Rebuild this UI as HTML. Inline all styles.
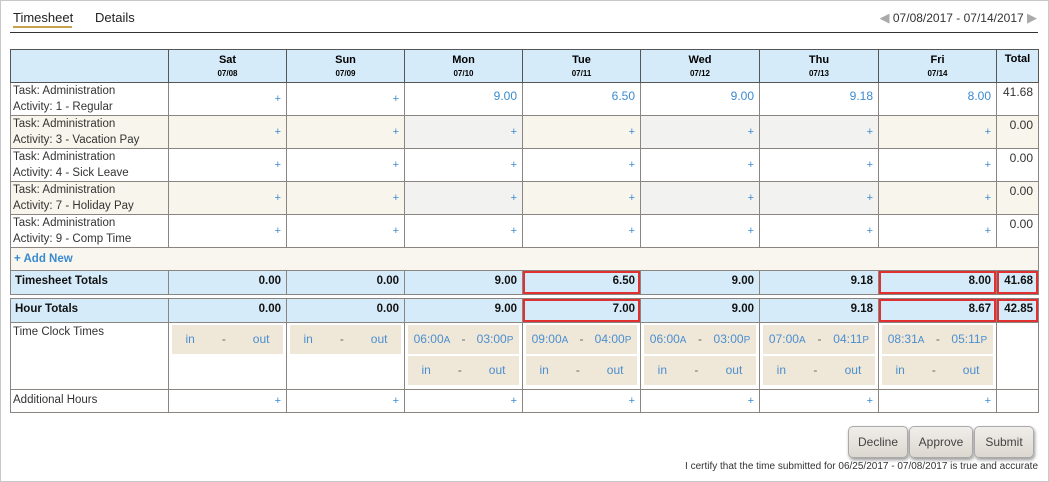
<!DOCTYPE html>
<html><head><style>
body{margin:0;width:1049px;height:482px;background:#fff;font-family:"Liberation Sans",Arial,sans-serif;position:relative;overflow:hidden}
.frame{position:absolute;left:0;top:0;width:1047px;height:480px;border:1px solid #c8c8c8}
.tab{position:absolute;top:10px;font-size:13px;color:#222}
.hr{position:absolute;left:10px;top:32px;width:1028px;height:1px;background:#333}
.range{position:absolute;right:12px;top:10px;font-size:12px;color:#333}
.range b{color:#aaa;font-size:13px;font-weight:normal}
table{position:absolute;left:10px;top:49px;border-collapse:collapse;table-layout:fixed;width:1028px;font-size:12px}
td{border:1px solid #8a8580;padding:0 5px;vertical-align:middle}
thead td{background:#d6ebfa;text-align:center;font-weight:bold;font-size:11px;height:29px;border-color:#555}
thead td small{display:block;font-size:8px;margin-top:3px}
.lab{padding:0 2px;color:#333;line-height:16px;font-size:11.5px}
.p{text-align:right;color:#3b8ad0;font-size:11px}
.v{text-align:right;color:#3b8ad0;vertical-align:top;padding-top:6px}
.tot{text-align:right;vertical-align:top;padding-top:2px;color:#333}
.alt td{background:#f7f5ec}
.alt td.g{background:#f2f2f0}
.t td{background:#d6ebfa;font-weight:bold;text-align:right;height:20px;color:#111;font-size:11.5px;padding-bottom:3px}
.t td:first-child{text-align:left;padding-left:4px}
.red{box-shadow:inset 0 0 0 2px #e03030}
.box{background:#efe7d8;height:29px;line-height:29px;color:#4c8fd0;font-size:12px;display:flex;justify-content:space-around;margin-bottom:2px}
.box span.d{color:#666}
.tc td{vertical-align:top;padding:2px 3px}
.btn{position:absolute;top:426px;height:30px;line-height:30px;font-size:12px;color:#444;background:linear-gradient(#f0eeea,#dcd8d0);border:1px solid #aaa;border-radius:5px;box-shadow:1px 2px 3px #999;text-align:center}
</style></head><body>
<div class="frame"></div>
<div class="tab" style="left:13px">Timesheet</div>
<div style="position:absolute;left:13px;top:26px;width:59px;height:2px;background:#c8a24a"></div>
<div class="tab" style="left:95px">Details</div>
<div class="hr"></div>
<div class="range"><b>◀</b> 07/08/2017 - 07/14/2017 <b>▶</b></div>
<table>
<colgroup><col style="width:158px"><col style="width:118px"><col style="width:118px"><col style="width:118px"><col style="width:118px"><col style="width:119px"><col style="width:119px"><col style="width:118px"><col style="width:42px"></colgroup>
<thead><tr><td></td><td>Sat<small>07/08</small></td><td>Sun<small>07/09</small></td><td>Mon<small>07/10</small></td><td>Tue<small>07/11</small></td><td>Wed<small>07/12</small></td><td>Thu<small>07/13</small></td><td>Fri<small>07/14</small></td><td style="vertical-align:top;padding-top:3px">Total</td></tr></thead>
<tbody>
<tr style="height:33px"><td class="lab">Task: Administration<br>Activity: 1 - Regular</td><td class="p">+</td><td class="p">+</td><td class="v">9.00</td><td class="v">6.50</td><td class="v">9.00</td><td class="v">9.18</td><td class="v">8.00</td><td class="tot">41.68</td></tr>
<tr style="height:33px" class="alt"><td class="lab">Task: Administration<br>Activity: 3 - Vacation Pay</td><td class="p">+</td><td class="p">+</td><td class="p g">+</td><td class="p">+</td><td class="p g">+</td><td class="p g">+</td><td class="p">+</td><td class="tot">0.00</td></tr>
<tr style="height:33px"><td class="lab">Task: Administration<br>Activity: 4 - Sick Leave</td><td class="p">+</td><td class="p">+</td><td class="p">+</td><td class="p">+</td><td class="p">+</td><td class="p">+</td><td class="p">+</td><td class="tot">0.00</td></tr>
<tr style="height:33px" class="alt"><td class="lab">Task: Administration<br>Activity: 7 - Holiday Pay</td><td class="p">+</td><td class="p">+</td><td class="p g">+</td><td class="p">+</td><td class="p g">+</td><td class="p g">+</td><td class="p">+</td><td class="tot">0.00</td></tr>
<tr style="height:33px"><td class="lab">Task: Administration<br>Activity: 9 - Comp Time</td><td class="p">+</td><td class="p">+</td><td class="p">+</td><td class="p">+</td><td class="p">+</td><td class="p">+</td><td class="p">+</td><td class="tot">0.00</td></tr>
<tr style="height:23px"><td colspan="9" style="background:#f8f6ee;color:#3b8ad0;font-weight:bold;padding-left:3px;font-size:11.5px">+ Add New</td></tr>
<tr class="t"><td>Timesheet Totals</td><td>0.00</td><td>0.00</td><td>9.00</td><td class="red">6.50</td><td>9.00</td><td>9.18</td><td class="red">8.00</td><td class="red">41.68</td></tr>
<tr style="height:4px"><td colspan="9" style="border-left:none;border-right:none;padding:0;background:#fff"></td></tr>
<tr class="t"><td>Hour Totals</td><td>0.00</td><td>0.00</td><td>9.00</td><td class="red">7.00</td><td>9.00</td><td>9.18</td><td class="red">8.67</td><td class="red">42.85</td></tr>
<tr class="tc" style="height:64px"><td class="lab" style="padding:1px 2px">Time Clock Times</td>
<td><div class="box"><span>in</span><span class="d">-</span><span>out</span></div></td>
<td><div class="box"><span>in</span><span class="d">-</span><span>out</span></div></td>
<td><div class="box"><span>06:00<small>A</small></span><span class="d">-</span><span>03:00<small>P</small></span></div><div class="box"><span>in</span><span class="d">-</span><span>out</span></div></td>
<td><div class="box"><span>09:00<small>A</small></span><span class="d">-</span><span>04:00<small>P</small></span></div><div class="box"><span>in</span><span class="d">-</span><span>out</span></div></td>
<td><div class="box"><span>06:00<small>A</small></span><span class="d">-</span><span>03:00<small>P</small></span></div><div class="box"><span>in</span><span class="d">-</span><span>out</span></div></td>
<td><div class="box"><span>07:00<small>A</small></span><span class="d">-</span><span>04:11<small>P</small></span></div><div class="box"><span>in</span><span class="d">-</span><span>out</span></div></td>
<td><div class="box"><span>08:31<small>A</small></span><span class="d">-</span><span>05:11<small>P</small></span></div><div class="box"><span>in</span><span class="d">-</span><span>out</span></div></td>
<td></td></tr>
<tr style="height:23px"><td class="lab" style="vertical-align:top;padding-top:2px">Additional Hours</td><td class="p">+</td><td class="p">+</td><td class="p">+</td><td class="p">+</td><td class="p">+</td><td class="p">+</td><td class="p">+</td><td></td></tr>
</tbody></table>
<div class="btn" style="left:848px;width:58px">Decline</div>
<div class="btn" style="left:909px;width:62px">Approve</div>
<div class="btn" style="left:974px;width:58px">Submit</div>
<div style="position:absolute;right:11px;top:461px;font-size:10px;color:#333">I certify that the time submitted for 06/25/2017 - 07/08/2017 is true and accurate</div>
</body></html>
